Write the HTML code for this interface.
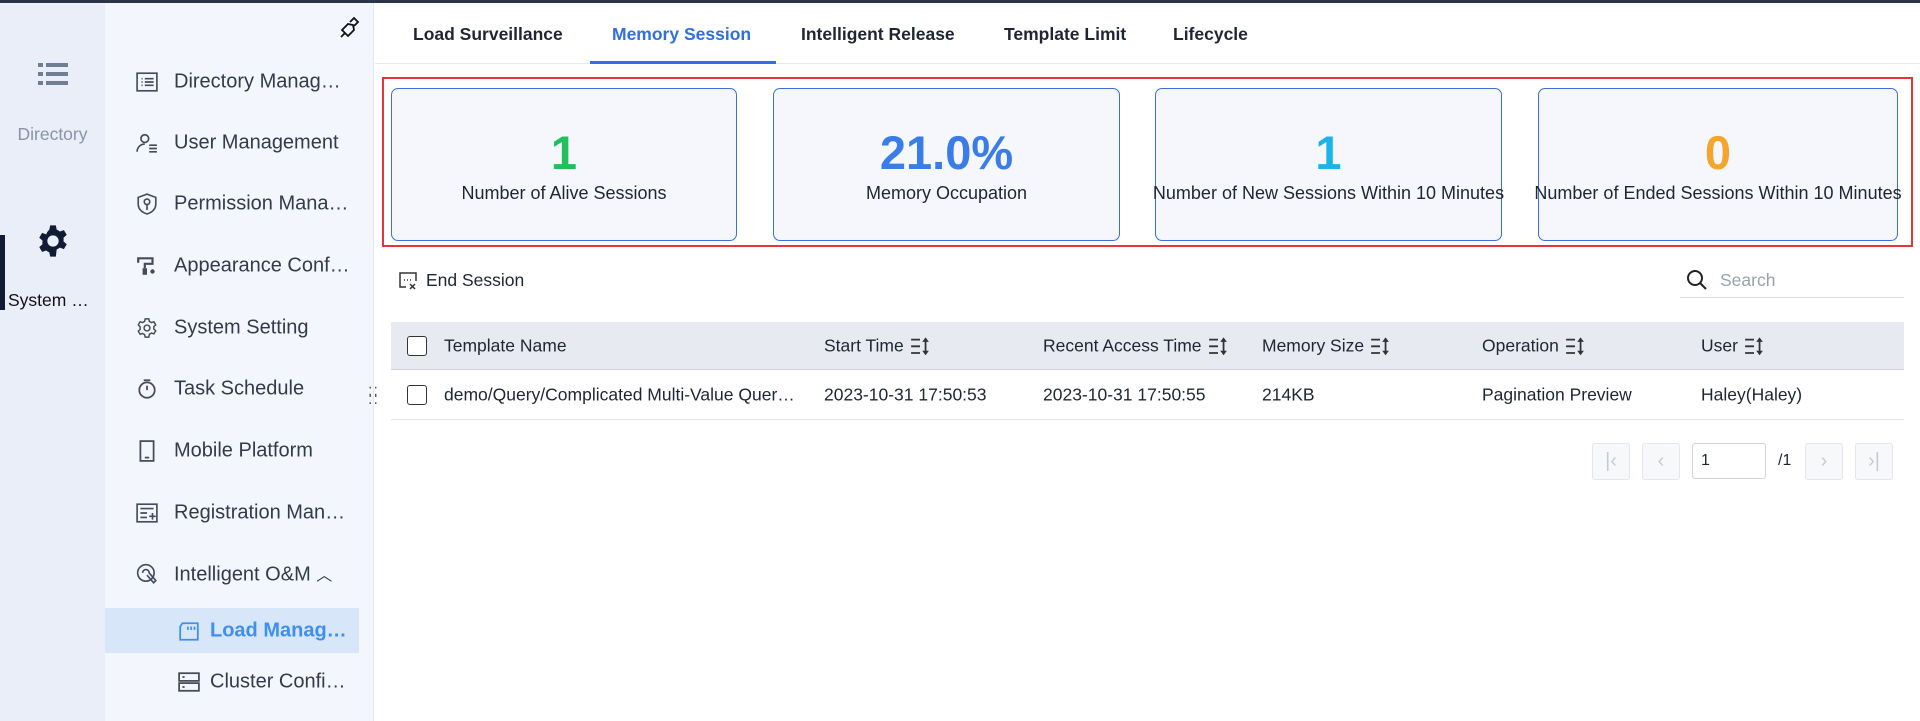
<!DOCTYPE html>
<html><head><meta charset="utf-8"><style>
*{box-sizing:border-box;margin:0;padding:0}
body{width:1920px;height:721px;overflow:hidden;background:#fff;font-family:"Liberation Sans",sans-serif;color:#1f2533;position:relative}
.abs{position:absolute}
.top{left:0;top:0;width:1920px;height:3px;background:#2b3547}
.rail{left:0;top:3px;width:105px;height:718px;background:#e9eef8}
.side{left:105px;top:3px;width:269px;height:718px;background:#f3f6fc;border-right:1px solid #e2e6ee}
.mi{position:absolute;left:174px;font-size:20px;color:#333a4a;white-space:nowrap;transform:translateY(-50%)}
.ic{position:absolute;left:136px;width:22px;height:22px;transform:translateY(-50%)}
.tab{position:absolute;top:24px;font-size:17.5px;font-weight:bold;color:#1f2533}
.card{position:absolute;top:88px;height:153px;background:#f5f7fc;border:1px solid #3a6fd8;border-radius:7px;text-align:center}
.num{position:absolute;left:0;right:0;top:38px;font-size:47px;font-weight:bold;line-height:52px}
.lab{position:absolute;left:-14px;right:-14px;top:94px;font-size:18px;white-space:nowrap;color:#1f2533}
.th{position:absolute;top:346px;transform:translateY(-50%);font-size:17.5px;color:#1f2533;white-space:nowrap}
.td{position:absolute;top:395px;transform:translateY(-50%);font-size:17.5px;color:#1f2533;white-space:nowrap}
.cb{position:absolute;left:407px;width:20px;height:20px;border:1.5px solid #333;border-radius:3px;background:#fff}
.pb{position:absolute;top:443px;width:38px;height:37px;border:1px solid #e3e6ec;background:#f7f8fa;border-radius:3px;color:#c6cad2;font-size:20px;text-align:center;line-height:35px}
.srt{display:inline-block;vertical-align:middle;margin-left:6px}
</style></head><body>
<div class="abs top"></div>
<div class="abs rail"></div>
<div class="abs side"></div>
<svg class="abs" style="left:38px;top:63px" width="30" height="22" viewBox="0 0 30 22"><g fill="#6f7d95"><rect x="0" y="0" width="5" height="4"/><rect x="8" y="0" width="22" height="4"/><rect x="0" y="9" width="5" height="4"/><rect x="8" y="9" width="22" height="4"/><rect x="0" y="18" width="5" height="4"/><rect x="8" y="18" width="22" height="4"/></g></svg>
<div class="abs" style="left:0;width:105px;top:124px;text-align:center;font-size:17.5px;color:#8a94a6">Directory</div>
<div class="abs" style="left:0;top:235px;width:5px;height:75px;background:#111b33"></div>
<svg class="abs" style="left:36px;top:224px" width="34" height="34" viewBox="0 0 24 24"><path fill="#111b33" fill-rule="evenodd" d="M10 1h4l.6 3a8 8 0 0 1 2.2 1.3l2.9-1 2 3.4-2.3 2a8 8 0 0 1 0 2.6l2.3 2-2 3.4-2.9-1a8 8 0 0 1-2.2 1.3L14 23h-4l-.6-3a8 8 0 0 1-2.2-1.3l-2.9 1-2-3.4 2.3-2a8 8 0 0 1 0-2.6l-2.3-2 2-3.4 2.9 1A8 8 0 0 1 9.4 4zM12 8a4 4 0 1 0 0 8 4 4 0 0 0 0-8z"/></svg>
<div class="abs" style="left:8px;top:290px;font-size:17.5px;color:#111">System …</div>
<svg class="abs" style="left:338px;top:16px" width="22" height="22" viewBox="0 0 22 22"><g fill="none" stroke="#111" stroke-width="1.8"><path d="M4 14l6-6 5 1 1 5-6 6z"/><path d="M12 6l4-4 4 4-4 4"/><path d="M7 17l-4 4"/></g></svg>
<svg class="ic" style="top:82px" viewBox="0 0 20 20"><g fill="none" stroke="#444c5c" stroke-width="1.5"><rect x="1" y="2" width="18" height="16"/><path d="M5 7h1M8 7h8M5 10h1M8 10h8M5 13h1M8 13h8"/></g></svg>
<div class="mi" style="top:82px">Directory Manag…</div>
<svg class="ic" style="top:143px" viewBox="0 0 20 20"><g fill="none" stroke="#444c5c" stroke-width="1.5"><circle cx="8" cy="6" r="3.5"/><path d="M1 18c0-4 3-7 7-7M12 12h7M12 15h7M12 18h7"/></g></svg>
<div class="mi" style="top:143px">User Management</div>
<svg class="ic" style="top:204px" viewBox="0 0 20 20"><g fill="none" stroke="#444c5c" stroke-width="1.5"><path d="M10 1l8 3v6c0 5-4 8-8 9-4-1-8-4-8-9V4z"/><circle cx="10" cy="8" r="2.5"/><path d="M10 10.5v5"/></g></svg>
<div class="mi" style="top:204px">Permission Mana…</div>
<svg class="ic" style="top:266px" viewBox="0 0 20 20"><g fill="#444c5c"><path d="M1 2h15v7H9v3H7V7h7V4H3v3H1z"/><rect x="6" y="12" width="4" height="6"/><circle cx="15" cy="15" r="2"/></g></svg>
<div class="mi" style="top:266px">Appearance Conf…</div>
<svg class="ic" style="top:328px" viewBox="0 0 24 24"><path fill="none" stroke="#444c5c" stroke-width="1.6" d="M10 2h4l.6 2.8a8 8 0 0 1 2.2 1.3l2.7-.9 2 3.4-2.1 1.9a8 8 0 0 1 0 2.6l2.1 1.9-2 3.4-2.7-.9a8 8 0 0 1-2.2 1.3L14 22h-4l-.6-2.8a8 8 0 0 1-2.2-1.3l-2.7.9-2-3.4 2.1-1.9a8 8 0 0 1 0-2.6L2.5 8.6l2-3.4 2.7.9a8 8 0 0 1 2.2-1.3z"/><circle cx="12" cy="12" r="3.2" fill="none" stroke="#444c5c" stroke-width="1.6"/></svg>
<div class="mi" style="top:328px">System Setting</div>
<svg class="ic" style="top:389px" viewBox="0 0 20 20"><g fill="none" stroke="#444c5c" stroke-width="1.6"><circle cx="10" cy="11" r="7"/><path d="M7 2h6M10 11V7"/></g></svg>
<div class="mi" style="top:389px">Task Schedule</div>
<svg class="ic" style="top:451px" viewBox="0 0 20 20"><g fill="none" stroke="#444c5c" stroke-width="1.6"><rect x="4" y="1" width="12" height="18"/><path d="M8 16h4"/></g></svg>
<div class="mi" style="top:451px">Mobile Platform</div>
<svg class="ic" style="top:513px" viewBox="0 0 20 20"><g fill="none" stroke="#444c5c" stroke-width="1.5"><rect x="1" y="2" width="18" height="16"/><path d="M4 6h12M4 10h6M4 14h6M12 13h6M15 10v6"/></g></svg>
<div class="mi" style="top:513px">Registration Man…</div>
<svg class="ic" style="top:574px" viewBox="0 0 20 20"><g fill="none" stroke="#444c5c" stroke-width="1.5"><circle cx="9" cy="9" r="7.5"/><path d="M6 9a3 3 0 0 1 6 0l6 7-2 2-6-7"/></g></svg>
<div class="mi" style="top:574px">Intelligent O&amp;M <span style="font-size:16px">︿</span></div>
<div class="abs" style="left:105px;top:608px;width:254px;height:45px;background:#d8e6f9"></div>
<svg class="abs" style="left:178px;top:620px" width="22" height="22" viewBox="0 0 20 20"><g fill="none" stroke="#3d8ff0" stroke-width="1.6"><path d="M4 3h14v15H2V6z"/><path d="M9 6v3M12 6v3M15 6v3"/></g></svg>
<div class="mi" style="left:210px;top:631px;color:#3d8ff0;font-weight:bold">Load Manag…</div>
<svg class="abs" style="left:178px;top:671px" width="22" height="22" viewBox="0 0 20 20"><g fill="none" stroke="#444c5c" stroke-width="1.6"><rect x="1" y="2" width="18" height="7"/><rect x="1" y="11" width="18" height="7"/><path d="M4 5.5h2M4 14.5h2"/></g></svg>
<div class="mi" style="left:210px;top:682px">Cluster Confi…</div>
<div class="abs" style="left:368px;top:389px;font-size:14px;color:#555;letter-spacing:1px;line-height:7px">⁚⁚<br>⁚⁚</div>
<div class="abs" style="left:375px;top:63px;width:1545px;height:1px;background:#e6e9ef"></div>
<div class="tab" style="left:413px">Load Surveillance</div>
<div class="tab" style="left:612px;color:#2f6fe0">Memory Session</div>
<div class="tab" style="left:801px">Intelligent Release</div>
<div class="tab" style="left:1004px">Template Limit</div>
<div class="tab" style="left:1173px">Lifecycle</div>
<div class="abs" style="left:590px;top:61px;width:186px;height:3px;background:#2f6fe0"></div>
<div class="abs" style="left:382px;top:77px;width:1531px;height:170px;border:2px solid #e8333a"></div>
<div class="card" style="left:391px;width:346px"><div class="num" style="color:#22c05c">1</div><div class="lab">Number of Alive Sessions</div></div>
<div class="card" style="left:773px;width:347px"><div class="num" style="color:#3a7de8">21.0%</div><div class="lab">Memory Occupation</div></div>
<div class="card" style="left:1155px;width:347px"><div class="num" style="color:#1cb2ea">1</div><div class="lab">Number of New Sessions Within 10 Minutes</div></div>
<div class="card" style="left:1538px;width:360px"><div class="num" style="color:#f5a52a">0</div><div class="lab">Number of Ended Sessions Within 10 Minutes</div></div>
<svg class="abs" style="left:398px;top:271px" width="20" height="20" viewBox="0 0 20 20"><g fill="none" stroke="#333" stroke-width="1.5"><path d="M8 16H2V2h16v8"/><path d="M6 9h1M9 9h1M12 9h1M12 13l5 5M17 13l-5 5"/></g></svg>
<div class="abs" style="left:426px;top:270px;font-size:17.5px">End Session</div>
<svg class="abs" style="left:1686px;top:269px" width="22" height="22" viewBox="0 0 22 22"><g fill="none" stroke="#222" stroke-width="2"><circle cx="9" cy="9" r="7"/><path d="M14 14l6 6"/></g></svg>
<div class="abs" style="left:1720px;top:270px;font-size:17.5px;color:#9aa1ad">Search</div>
<div class="abs" style="left:1680px;top:297px;width:224px;height:1px;background:#dcdfe5"></div>
<div class="abs" style="left:391px;top:322px;width:1513px;height:48px;background:#e7eaf1;border-bottom:1px solid #cdd2db"></div>
<div class="abs" style="left:391px;top:419px;width:1513px;height:1px;background:#dfe2e8"></div>
<div class="cb" style="top:336px"></div><div class="cb" style="top:385px"></div>
<svg width="0" height="0" style="position:absolute"><defs><symbol id="s" viewBox="0 0 18 18"><g stroke="#333" stroke-width="1.6" fill="#333"><path d="M1 3h8M1 9h8M1 15h8M14 2v14" fill="none"/><path d="M11 5l3-4 3 4zM11 13l3 4 3-4z" stroke="none"/></g></symbol></defs></svg>
<div class="th" style="left:444px">Template Name</div>
<div class="th" style="left:824px">Start Time<svg class="srt" width="20" height="20"><use href="#s"/></svg></div>
<div class="th" style="left:1043px">Recent Access Time<svg class="srt" width="20" height="20"><use href="#s"/></svg></div>
<div class="th" style="left:1262px">Memory Size<svg class="srt" width="20" height="20"><use href="#s"/></svg></div>
<div class="th" style="left:1482px">Operation<svg class="srt" width="20" height="20"><use href="#s"/></svg></div>
<div class="th" style="left:1701px">User<svg class="srt" width="20" height="20"><use href="#s"/></svg></div>
<div class="td" style="left:444px">demo/Query/Complicated Multi-Value Quer…</div>
<div class="td" style="left:824px">2023-10-31 17:50:53</div>
<div class="td" style="left:1043px">2023-10-31 17:50:55</div>
<div class="td" style="left:1262px">214KB</div>
<div class="td" style="left:1482px">Pagination Preview</div>
<div class="td" style="left:1701px">Haley(Haley)</div>
<div class="pb" style="left:1592px">|‹</div>
<div class="pb" style="left:1642px">‹</div>
<div class="abs" style="left:1692px;top:443px;width:74px;height:36px;border:1px solid #cfd3da;border-radius:3px;font-size:16px;padding:8px 8px">1</div>
<div class="abs" style="left:1778px;top:452px;font-size:16px">/1</div>
<div class="pb" style="left:1805px">›</div>
<div class="pb" style="left:1855px">›|</div>
</body></html>
